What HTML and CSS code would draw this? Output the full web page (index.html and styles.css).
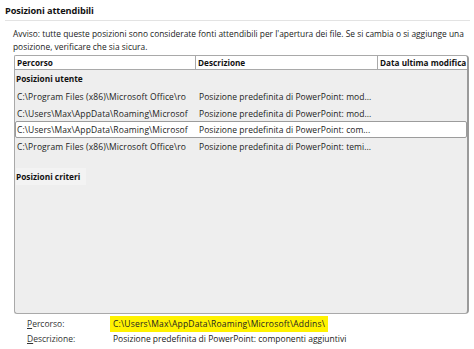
FILE: index.html
```html
<!DOCTYPE html>
<html lang="it">
<head>
<meta charset="utf-8">
<link rel="stylesheet" href="styles.css">
</head>
<body>
<div class="page">
  <div class="title">Posizioni attendibili</div>
  <div class="sep"></div>
  <p class="warning">Avviso: tutte queste posizioni sono considerate fonti attendibili per l'apertura dei file. Se si cambia o si aggiunge una posizione, verificare che sia sicura.</p>
  <div class="table">
    <div class="thead">
      <div class="th c1">Percorso</div>
      <div class="th c2">Descrizione</div>
      <div class="th c3">Data ultima modifica</div>
    </div>
    <div class="tbody">
      <div class="group">Posizioni utente</div>
      <div class="row"><span class="c1">C:\Program Files (x86)\Microsoft Office\ro</span><span class="c2">Posizione predefinita di PowerPoint: mod...</span></div>
      <div class="row"><span class="c1">C:\Users\Max\AppData\Roaming\Microsof</span><span class="c2">Posizione predefinita di PowerPoint: mod...</span></div>
      <div class="row selected"><span class="c1">C:\Users\Max\AppData\Roaming\Microsof</span><span class="c2">Posizione predefinita di PowerPoint: com...</span></div>
      <div class="row"><span class="c1">C:\Program Files (x86)\Microsoft Office\ro</span><span class="c2">Posizione predefinita di PowerPoint: temi...</span></div>
      <div class="group group2"><span class="glabel">Posizioni criteri</span></div>
    </div>
  </div>
  <div class="details">
    <div class="drow"><span class="dlabel"><u>P</u>ercorso:</span><span class="dval hl">C:\Users\Max\AppData\Roaming\Microsoft\Addins\</span></div>
    <div class="drow"><span class="dlabel"><u>D</u>escrizione:</span><span class="dval">Posizione predefinita di PowerPoint: componenti aggiuntivi</span></div>
  </div>
</div>
</body>
</html>
```

FILE: styles.css
```css
html, body {
  margin: 0;
  padding: 0;
  background: #ffffff;
}
body {
  font-family: "Open Sans", "Noto Sans", sans-serif;
  font-size: 8.5px;
  color: #222222;
  width: 474px;
  height: 349px;
  overflow: hidden;
}
.page {
  display: flex;
  flex-direction: column;
}
.title {
  font-weight: 700;
  color: #111;
  padding: 4px 0 0 5px;
  height: 14px;
  line-height: 14px;
  font-size: 9.2px;
  letter-spacing: -0.1px;
}
.sep {
  margin: 2px 4px 0 5px;
  border-top: 1px solid #e3e3e3;
}
.warning {
  margin: 6px 0 0 13px;
  line-height: 13px;
  width: 458px;
  font-size: 8.4px;
}
.table {
  margin: 2px 0 0 14px;
  width: 452px;
  height: 257px;
  border: 1px solid #a9a9a9;
  border-right: 2px solid #9a9a9a;
  border-radius: 2px 4px 4px 3px;
  background: #eeeeee;
  display: flex;
  flex-direction: column;
  overflow: hidden;
}
.thead {
  display: flex;
  height: 13px;
  background: #ffffff;
  border-bottom: 1px solid #a9a9a9;
  font-weight: 700;
  color: #111;
  font-size: 8.2px;
}
.th {
  line-height: 13px;
  padding-left: 2px;
  white-space: nowrap;
  overflow: hidden;
  box-sizing: border-box;
}
.thead .c1 { width: 181px; border-right: 1px solid #a9a9a9; }
.thead .c2 { width: 182px; border-right: 1px solid #a9a9a9; }
.thead .c3 { flex: 1; }
.tbody {
  display: flex;
  flex-direction: column;
  padding-top: 1px;
}
.group {
  font-weight: 700;
  color: #111;
  height: 16px;
  line-height: 16px;
  padding: 0 0 0 1px;
  margin-bottom: 1px;
  font-size: 8.3px;
}
.row {
  display: flex;
  height: 16.6px;
  line-height: 16px;
  white-space: nowrap;
  box-sizing: border-box;
  border: 1px solid transparent;
}
.row .c1 { width: 181px; padding-left: 1px; overflow: hidden; box-sizing: border-box; letter-spacing: 0.12px; }
.row .c2 { padding-left: 2px; letter-spacing: 0.05px; }
.row.selected {
  background: #ffffff;
  border: 1px solid #9c9c9c;
  border-radius: 2px;
}
.group2 {
  margin-top: 14px;
  height: 17px;
  line-height: 17px;
}
.glabel {
  display: inline-block;
  background: #f3f3f3;
  padding-right: 6px;
}
.details {
  display: flex;
  flex-direction: column;
  margin-top: 2px;
}
.drow {
  display: flex;
  height: 15px;
  line-height: 15px;
}
.dlabel {
  width: 83px;
  padding-left: 27px;
  color: #333;
}
.dval {
  color: #222;
  padding: 0 3px 0 3px;
}
.hl {
  background: #fff200;
  height: 16px;
  line-height: 16px;
  letter-spacing: 0.2px;
}
```
